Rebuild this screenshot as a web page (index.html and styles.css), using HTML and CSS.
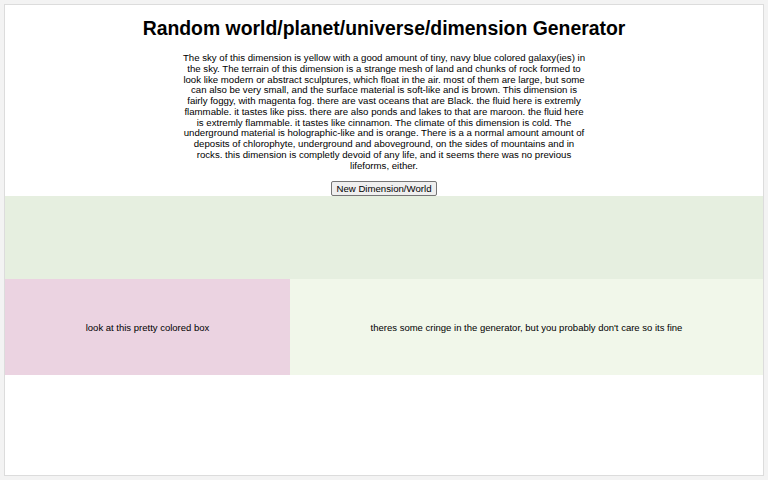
FILE: index.html
```html
<!DOCTYPE html>
<html>
<head>
<meta charset="utf-8">
<link rel="stylesheet" href="styles.css">
</head>
<body>
<div class="card">
  <header class="intro">
    <h1 class="title">Random world/planet/universe/dimension Generator</h1>
    <p class="story">The sky of this dimension is yellow with a good amount of tiny, navy blue colored galaxy(ies) in the sky. The terrain of this dimension is a strange mesh of land and chunks of rock formed to look like modern or abstract sculptures, which float in the air. most of them are large, but some can also be very small, and the surface material is soft-like and is brown. This dimension is fairly foggy, with magenta fog. there are vast oceans that are Black. the fluid here is extremly flammable. it tastes like piss. there are also ponds and lakes to that are maroon. the fluid here is extremly flammable. it tastes like cinnamon. The climate of this dimension is cold. The underground material is holographic-like and is orange. There is a a normal amount amount of deposits of chlorophyte, underground and aboveground, on the sides of mountains and in rocks. this dimension is completly devoid of any life, and it seems there was no previous lifeforms, either.</p>
    <button class="new-btn" type="button">New Dimension/World</button>
  </header>
  <div class="band"></div>
  <div class="row">
    <div class="box box-pink">look at this pretty colored box</div>
    <div class="box box-green">theres some cringe in the generator, but you probably don't care so its fine</div>
  </div>
</div>
</body>
</html>
```
FILE: styles.css
```css
html, body {
  margin: 0;
  padding: 0;
}
body {
  background: #f3f3f3;
  padding: 4px;
  font-family: "Liberation Sans", Arial, sans-serif;
  color: #000;
}
.card {
  background: #fff;
  border: 1px solid #dcdcdc;
  box-sizing: border-box;
  height: 472px;
  display: flex;
  flex-direction: column;
}
.intro {
  display: flex;
  flex-direction: column;
  align-items: center;
  padding-top: 12px;
}
.title {
  margin: 0;
  font-size: 19.4px;
  line-height: 22px;
  font-weight: bold;
}
.story {
  width: 404px;
  margin: 14px 0 0;
  font-size: 9.65px;
  line-height: 10.75px;
  text-align: center;
}
.new-btn {
  margin: 10px 0 0;
  font-family: "Liberation Sans", Arial, sans-serif;
  font-size: 9.65px;
  line-height: 11px;
  padding: 1px 4px;
  background: #efefef;
  border: 1px solid #767676;
  border-radius: 2px;
  color: #000;
}
.band {
  height: 83px;
  background: #e6efe0;
}
.row {
  display: flex;
  height: 96px;
}
.box {
  display: flex;
  align-items: center;
  justify-content: center;
  font-size: 9.5px;
}
.box-pink {
  width: 285px;
  background: #ebd3e1;
}
.box-green {
  flex: 1;
  background: #f1f7ea;
}
```
